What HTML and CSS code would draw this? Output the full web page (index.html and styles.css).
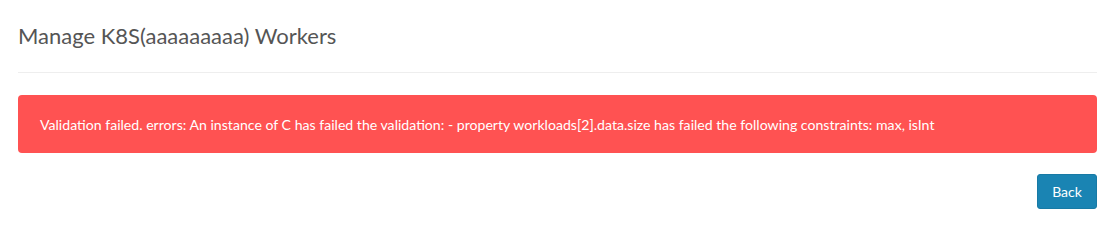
FILE: index.html
```html
<!DOCTYPE html>
<html>
<head>
<meta charset="utf-8">
<link rel="stylesheet" href="styles.css">
</head>
<body>
<div class="page">
  <h1 class="title">Manage K8S(aaaaaaaaa) Workers</h1>
  <hr class="divider">
  <div class="alert">Validation failed. errors: An instance of C has failed the validation: - property workloads[2].data.size has failed the following constraints: max, isInt</div>
  <div class="actions">
    <button class="btn">Back</button>
  </div>
</div>
</body>
</html>
```
FILE: styles.css
```css
html, body {
  margin: 0;
  padding: 0;
  background: #ffffff;
  font-family: Lato, "Open Sans", sans-serif;
}
.page {
  padding: 0 18px;
}
.title {
  margin: 0;
  padding-top: 23px;
  font-size: 22px;
  font-weight: 400;
  line-height: 26px;
  color: #555555;
}
.divider {
  margin: 23px 0 0 0;
  border: 0;
  border-top: 1px solid #eeeeee;
  height: 0;
}
.alert {
  margin-top: 22px;
  height: 58px;
  box-sizing: border-box;
  padding: 0 22px;
  display: flex;
  align-items: center;
  background: #ff5252;
  color: #ffffff;
  font-size: 14.12px;
  border-radius: 4px;
}
.actions {
  display: flex;
  justify-content: flex-end;
  margin-top: 21px;
}
.btn {
  width: 60px;
  height: 35px;
  background: #1a84b3;
  border: 1px solid #187aa5;
  border-radius: 3px;
  color: #ffffff;
  font-family: Lato, "Open Sans", sans-serif;
  font-size: 14px;
  padding: 0;
}
```
